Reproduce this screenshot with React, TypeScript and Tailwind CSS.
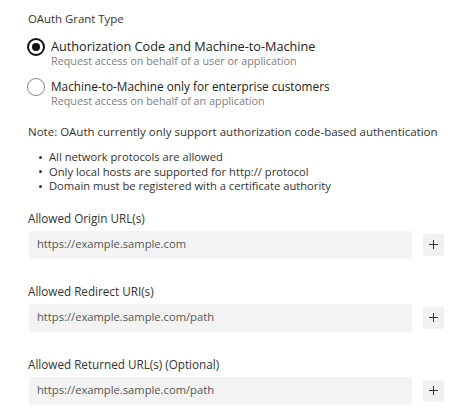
import React from "react";

function UrlField({ label, value }: { label: string; value: string }) {
  return (
    <div className="flex flex-col">
      <div className="text-[11.7px] leading-[16px] text-[#333]">{label}</div>
      <div className="mt-[5px] flex items-center">
        <div className="ml-px flex h-[28px] w-[383px] items-center rounded-[2px] bg-[#f3f3f3] pl-[8px] text-[11.2px] text-[#555]">
          {value}
        </div>
        <button className="ml-[11px] flex h-[22px] w-[21px] items-center justify-center rounded-[2px] bg-[#f1f1f1]">
          <svg width="9" height="9" viewBox="0 0 9 9">
            <path d="M4.5 0v9M0 4.5h9" stroke="#333" strokeWidth="1" />
          </svg>
        </button>
      </div>
    </div>
  );
}

export default function App() {
  return (
    <div
      className="h-[414px] w-[474px] bg-white pl-[28px] pt-[11px] text-[#333]"
      style={{ fontFamily: '"Open Sans", sans-serif' }}
    >
      <div className="text-[11.4px] leading-[16px]">OAuth Grant Type</div>

      <div className="mt-[12px] flex items-start">
        <div className="-ml-px -mt-px flex h-[18px] w-[18px] items-center justify-center rounded-full border-2 border-[#111]">
          <div className="h-[8px] w-[8px] rounded-full bg-[#111]" />
        </div>
        <div className="ml-[6px]">
          <div className="text-[12.7px] leading-[15px] text-[#222]">Authorization Code and Machine-to-Machine</div>
          <div className="text-[10.8px] leading-[14px] text-[#808080]">Request access on behalf of a user or application</div>
        </div>
      </div>

      <div className="mt-[11px] flex items-start">
        <div className="-ml-px -mt-px flex h-[18px] w-[18px] items-center justify-center rounded-full border border-[#888]" />
        <div className="ml-[6px]">
          <div className="text-[11.8px] leading-[15px] text-[#222]">Machine-to-Machine only for enterprise customers</div>
          <div className="text-[10.8px] leading-[14px] text-[#808080]">Request access on behalf of an application</div>
        </div>
      </div>

      <div className="mt-[16px] text-[11.5px] leading-[16px]">
        Note: OAuth currently only support authorization code-based authentication
      </div>

      <ul className="mt-[10px] text-[11.2px] leading-[14.5px]">
        {[
          "All network protocols are allowed",
          "Only local hosts are supported for http:// protocol",
          "Domain must be registered with a certificate authority",
        ].map((t) => (
          <li key={t} className="flex items-center">
            <span className="ml-[11px] mr-[7px] h-[3px] w-[3px] rounded-full bg-[#333]" />
            {t}
          </li>
        ))}
      </ul>

      <div className="mt-[16px] flex flex-col gap-[24px]">
        <UrlField label="Allowed Origin URL(s)" value="https://example.sample.com" />
        <UrlField label="Allowed Redirect URI(s)" value="https://example.sample.com/path" />
        <UrlField label="Allowed Returned URL(s) (Optional)" value="https://example.sample.com/path" />
      </div>
    </div>
  );
}
